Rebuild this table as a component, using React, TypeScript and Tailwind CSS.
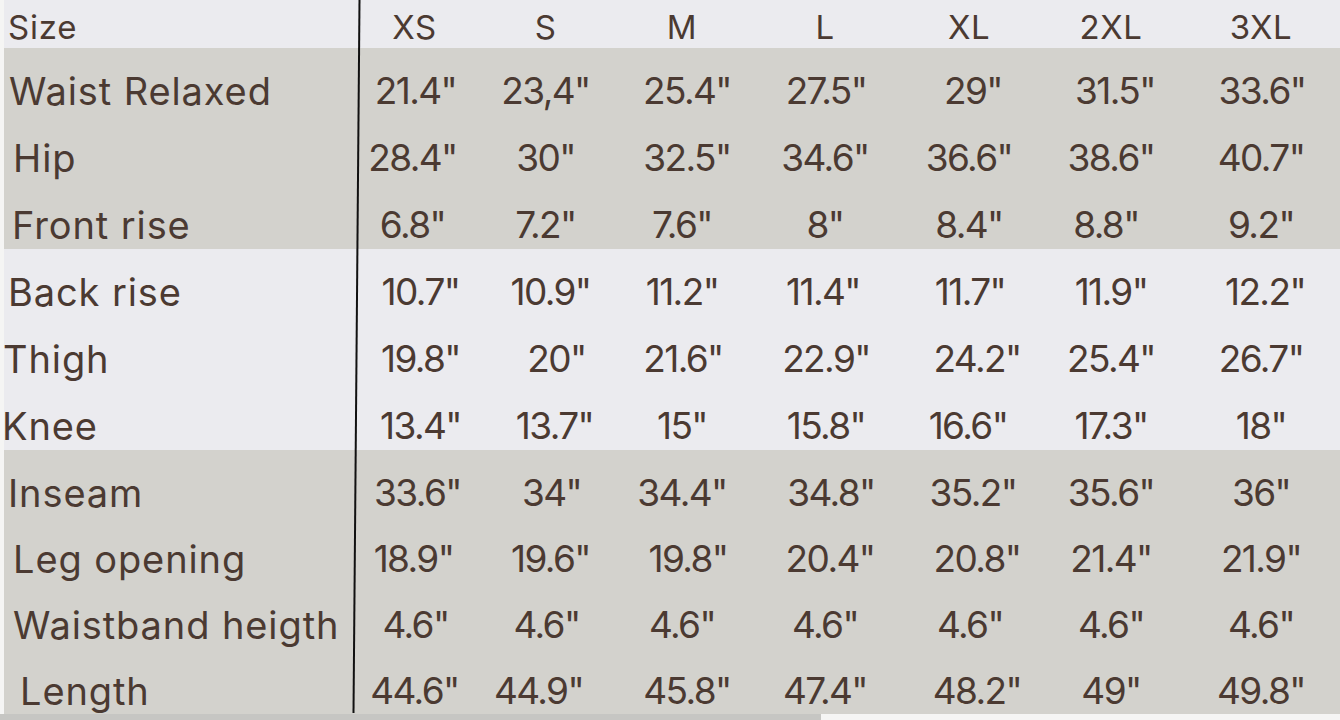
import React from "react";

const shiftX: Record<number, string> = {
  [-7]: "-translate-x-[7px]",
  [-5]: "-translate-x-[5px]",
  [-2]: "-translate-x-[2px]",
  [-1]: "-translate-x-[1px]",
  0: "",
  1: "translate-x-[1px]",
  3: "translate-x-[3px]",
  4: "translate-x-[4px]",
  5: "translate-x-[5px]",
  6: "translate-x-[6px]",
  8: "translate-x-[8px]",
  9: "translate-x-[9px]",
  11: "translate-x-[11px]",
};

type Row = {
  label: string;
  labelPad: string;
  values: string[];
  shifts: number[];
};

const rows: Row[] = [
  { label: "Waist Relaxed", labelPad: "pl-[9px]", values: ['21.4"', '23,4"', '25.4"', '27.5"', '29"', '31.5"', '33.6"'], shifts: [1, 0, 5, 1, 4, 4, 1] },
  { label: "Hip", labelPad: "pl-[13px]", values: ['28.4"', '30"', '32.5"', '34.6"', '36.6"', '38.6"', '40.7"'], shifts: [-2, 0, 5, 0, 0, 0, 0] },
  { label: "Front rise", labelPad: "pl-[12px]", values: ['6.8"', '7.2"', '7.6"', '8"', '8.4"', '8.8"', '9.2"'], shifts: [-2, 0, 0, 0, 0, -5, 0] },
  { label: "Back rise", labelPad: "pl-[8px]", values: ['10.7"', '10.9"', '11.2"', '11.4"', '11.7"', '11.9"', '12.2"'], shifts: [6, 5, 0, -2, 1, 0, 4] },
  { label: "Thigh", labelPad: "pl-[3px]", values: ['19.8"', '20"', '21.6"', '22.9"', '24.2"', '25.4"', '26.7"'], shifts: [6, 11, 1, 1, 8, 0, 0] },
  { label: "Knee", labelPad: "pl-[2px]", values: ['13.4"', '13.7"', '15"', '15.8"', '16.6"', '17.3"', '18"'], shifts: [6, 9, 0, 1, -1, 0, 0] },
  { label: "Inseam", labelPad: "pl-[8px]", values: ['33.6"', '34"', '34.4"', '34.8"', '35.2"', '35.6"', '36"'], shifts: [3, 6, 0, 6, 4, 0, 0] },
  { label: "Leg opening", labelPad: "pl-[13px]", values: ['18.9"', '19.6"', '19.8"', '20.4"', '20.8"', '21.4"', '21.9"'], shifts: [-1, 5, 6, 5, 8, 0, 0] },
  { label: "Waistband heigth", labelPad: "pl-[13px]", values: ['4.6"', '4.6"', '4.6"', '4.6"', '4.6"', '4.6"', '4.6"'], shifts: [1, 1, 0, 0, 1, 0, 0] },
  { label: "Length", labelPad: "pl-[20px]", values: ['44.6"', '44.9"', '45.8"', '47.4"', '48.2"', '49"', '49.8"'], shifts: [0, -7, 5, 0, 8, 0, 0] },
];

const sizes = ["XS", "S", "M", "L", "XL", "2XL", "3XL"];

const cols = "grid grid-cols-[346px_129px_133px_140px_146px_142px_142px_158px]";

function DataRow({ row, height }: { row: Row; height: string }) {
  return (
    <div className={`${cols} ${height} items-start pt-[21px]`}>
      <div className={`${row.labelPad} -ml-[4px] whitespace-nowrap tracking-[0.9px] text-[38px]`}>{row.label}</div>
      {row.values.map((v, i) => (
        <div key={i} className={`text-center whitespace-nowrap tracking-[-1.6px] ${shiftX[row.shifts[i]]}`}>
          {v}
        </div>
      ))}
    </div>
  );
}

export default function App() {
  return (
    <div
      className="relative w-[1340px] h-[720px] overflow-hidden bg-[#f5f5f4] text-[#4b3a32] text-[37px] leading-[44px]"
      style={{ fontFamily: "Inter, 'Noto Sans', sans-serif" }}
    >
      <div className="ml-[4px] flex flex-col">
        <div className={`${cols} h-[48px] bg-[#ebebef] items-start pt-[7px] text-[33px] leading-[40px]`}>
          <div className="pl-[4px] tracking-[0.8px]">Size</div>
          {sizes.map((s) => (
            <div key={s} className="text-center tracking-[0.5px]">{s}</div>
          ))}
        </div>
        <div className="bg-[#d3d2cd]">
          {rows.slice(0, 3).map((r) => (
            <DataRow key={r.label} row={r} height="h-[67px]" />
          ))}
        </div>
        <div className="bg-[#ebebef]">
          {rows.slice(3, 6).map((r) => (
            <DataRow key={r.label} row={r} height="h-[67px]" />
          ))}
        </div>
        <div className="bg-[#d3d2cd]">
          {rows.slice(6).map((r) => (
            <DataRow key={r.label} row={r} height="h-[66px]" />
          ))}
        </div>
      </div>
      <div className="h-[7px] w-[821px] bg-[#c6c6c3]" />
      <svg className="absolute left-0 top-0 pointer-events-none" width="1340" height="720">
        <line x1="359.5" y1="0" x2="353.5" y2="713" stroke="#111" strokeWidth="2" />
      </svg>
    </div>
  );
}
